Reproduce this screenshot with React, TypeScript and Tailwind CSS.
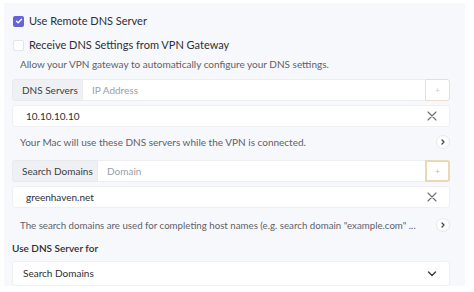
import React from "react";

function Check({ checked }: { checked: boolean }) {
  return checked ? (
    <div className="w-[11px] h-[11px] rounded-[2px] bg-[#6464d6] flex items-center justify-center">
      <svg width="8" height="8" viewBox="0 0 8 8" fill="none">
        <path d="M1.5 4.2 L3.2 5.8 L6.5 2.3" stroke="white" strokeWidth="1.4" strokeLinecap="round" strokeLinejoin="round" />
      </svg>
    </div>
  ) : (
    <div className="w-[11px] h-[11px] rounded-[2px] bg-white border border-[#e3e5ea]" />
  );
}

function X() {
  return (
    <svg width="10" height="10" viewBox="0 0 10 10">
      <path d="M1 1 L9 9 M9 1 L1 9" stroke="#6b6f78" strokeWidth="1.1" strokeLinecap="round" />
    </svg>
  );
}

function Circle() {
  return (
    <div className="w-[14px] h-[14px] shrink-0 rounded-full bg-white border border-[#e6e8ec] flex items-center justify-center">
      <svg width="6" height="6" viewBox="0 0 6 6">
        <path d="M2 1 L4 3 L2 5" stroke="#3a3d44" strokeWidth="1.2" fill="none" strokeLinecap="round" strokeLinejoin="round" />
      </svg>
    </div>
  );
}

function AddRow({ label, placeholder, focused, labelW }: { label: string; placeholder: string; focused?: boolean; labelW: string }) {
  return (
    <div className="flex h-[22px]">
      <div className={`${labelW} whitespace-nowrap bg-[#eef0f4] border border-[#e8eaee] rounded-l-[3px] flex items-center pl-[9px] text-[#3a3d44]`}>{label}</div>
      <div className="flex-1 bg-white border-y border-[#eceef2] flex items-center pl-[9px] text-[#9a9ea6]">{placeholder}</div>
      <div
        className={
          focused
            ? "w-[25px] bg-white border-2 border-[#ead8b2] rounded-r-[3px] flex items-center justify-center text-[#c9b48c] text-[8px]"
            : "w-[25px] bg-white border border-[#eedcd0] rounded-r-[3px] flex items-center justify-center text-[#d8c6bb] text-[8px]"
        }
      >
        +
      </div>
    </div>
  );
}

function ValueRow({ value }: { value: string }) {
  return (
    <div className="mt-[4px] h-[22px] bg-white border border-[#eef0f3] rounded-[3px] flex items-center justify-between pl-[13px] pr-[12px] text-[#2c2f36]">
      <span>{value}</span>
      <X />
    </div>
  );
}

function Help({ text, mt, size }: { text: string; mt: string; size: string }) {
  return (
    <div className={`${mt} h-[24px] flex items-center justify-between gap-[8px] pl-[8px] text-[#5d616a] whitespace-nowrap`}>
      <span className={size}>{text}</span>
      <Circle />
    </div>
  );
}

export default function App() {
  return (
    <div className="w-[474px] h-[292px] bg-white" style={{ fontFamily: "Lato, 'Open Sans', sans-serif" }}>
      <div className="ml-[4px] mt-[3px] w-[461px] h-[283px] bg-[#f7f8fb] text-[10px] pl-[8px] pr-[15px] pt-[12px]">
        <div className="flex items-center gap-[5px] h-[12px] pl-[1px] text-[#2c2f36] text-[11px]">
          <Check checked />
          <span>Use Remote DNS Server</span>
        </div>
        <div className="flex items-center gap-[5px] h-[12px] mt-[12px] pl-[1px] text-[#2c2f36] text-[11px]">
          <Check checked={false} />
          <span>Receive DNS Settings from VPN Gateway</span>
        </div>
        <div className="mt-[6px] pl-[8px] text-[#5d616a] h-[14px] leading-[14px] whitespace-nowrap">Allow your VPN gateway to automatically configure your DNS settings.</div>
        <div className="mt-[8px]">
          <AddRow label="DNS Servers" placeholder="IP Address" labelW="w-[71px]" />
          <ValueRow value="10.10.10.10" />
          <Help text="Your Mac will use these DNS servers while the VPN is connected." mt="mt-[3px]" size="text-[10px]" />
        </div>
        <div className="mt-[6px]">
          <AddRow label="Search Domains" placeholder="Domain" labelW="w-[86px]" focused />
          <ValueRow value="greenhaven.net" />
          <Help text={'The search domains are used for completing host names (e.g. search domain "example.com" ...'} mt="mt-[5px]" size="text-[9.7px]" />
        </div>
        <div className="mt-[4px] text-[#2c2f36] font-semibold h-[14px] leading-[14px]">Use DNS Server for</div>
        <div className="mt-[6px] h-[25px] bg-white border border-[#eef0f3] rounded-[3px] flex items-center justify-between pl-[10px] pr-[12px] text-[#2c2f36]">
          <span>Search Domains</span>
          <svg width="10" height="6" viewBox="0 0 10 6">
            <path d="M1.5 1 L5 4.5 L8.5 1" stroke="#3a3d44" strokeWidth="1.4" fill="none" strokeLinecap="round" strokeLinejoin="round" />
          </svg>
        </div>
      </div>
    </div>
  );
}
